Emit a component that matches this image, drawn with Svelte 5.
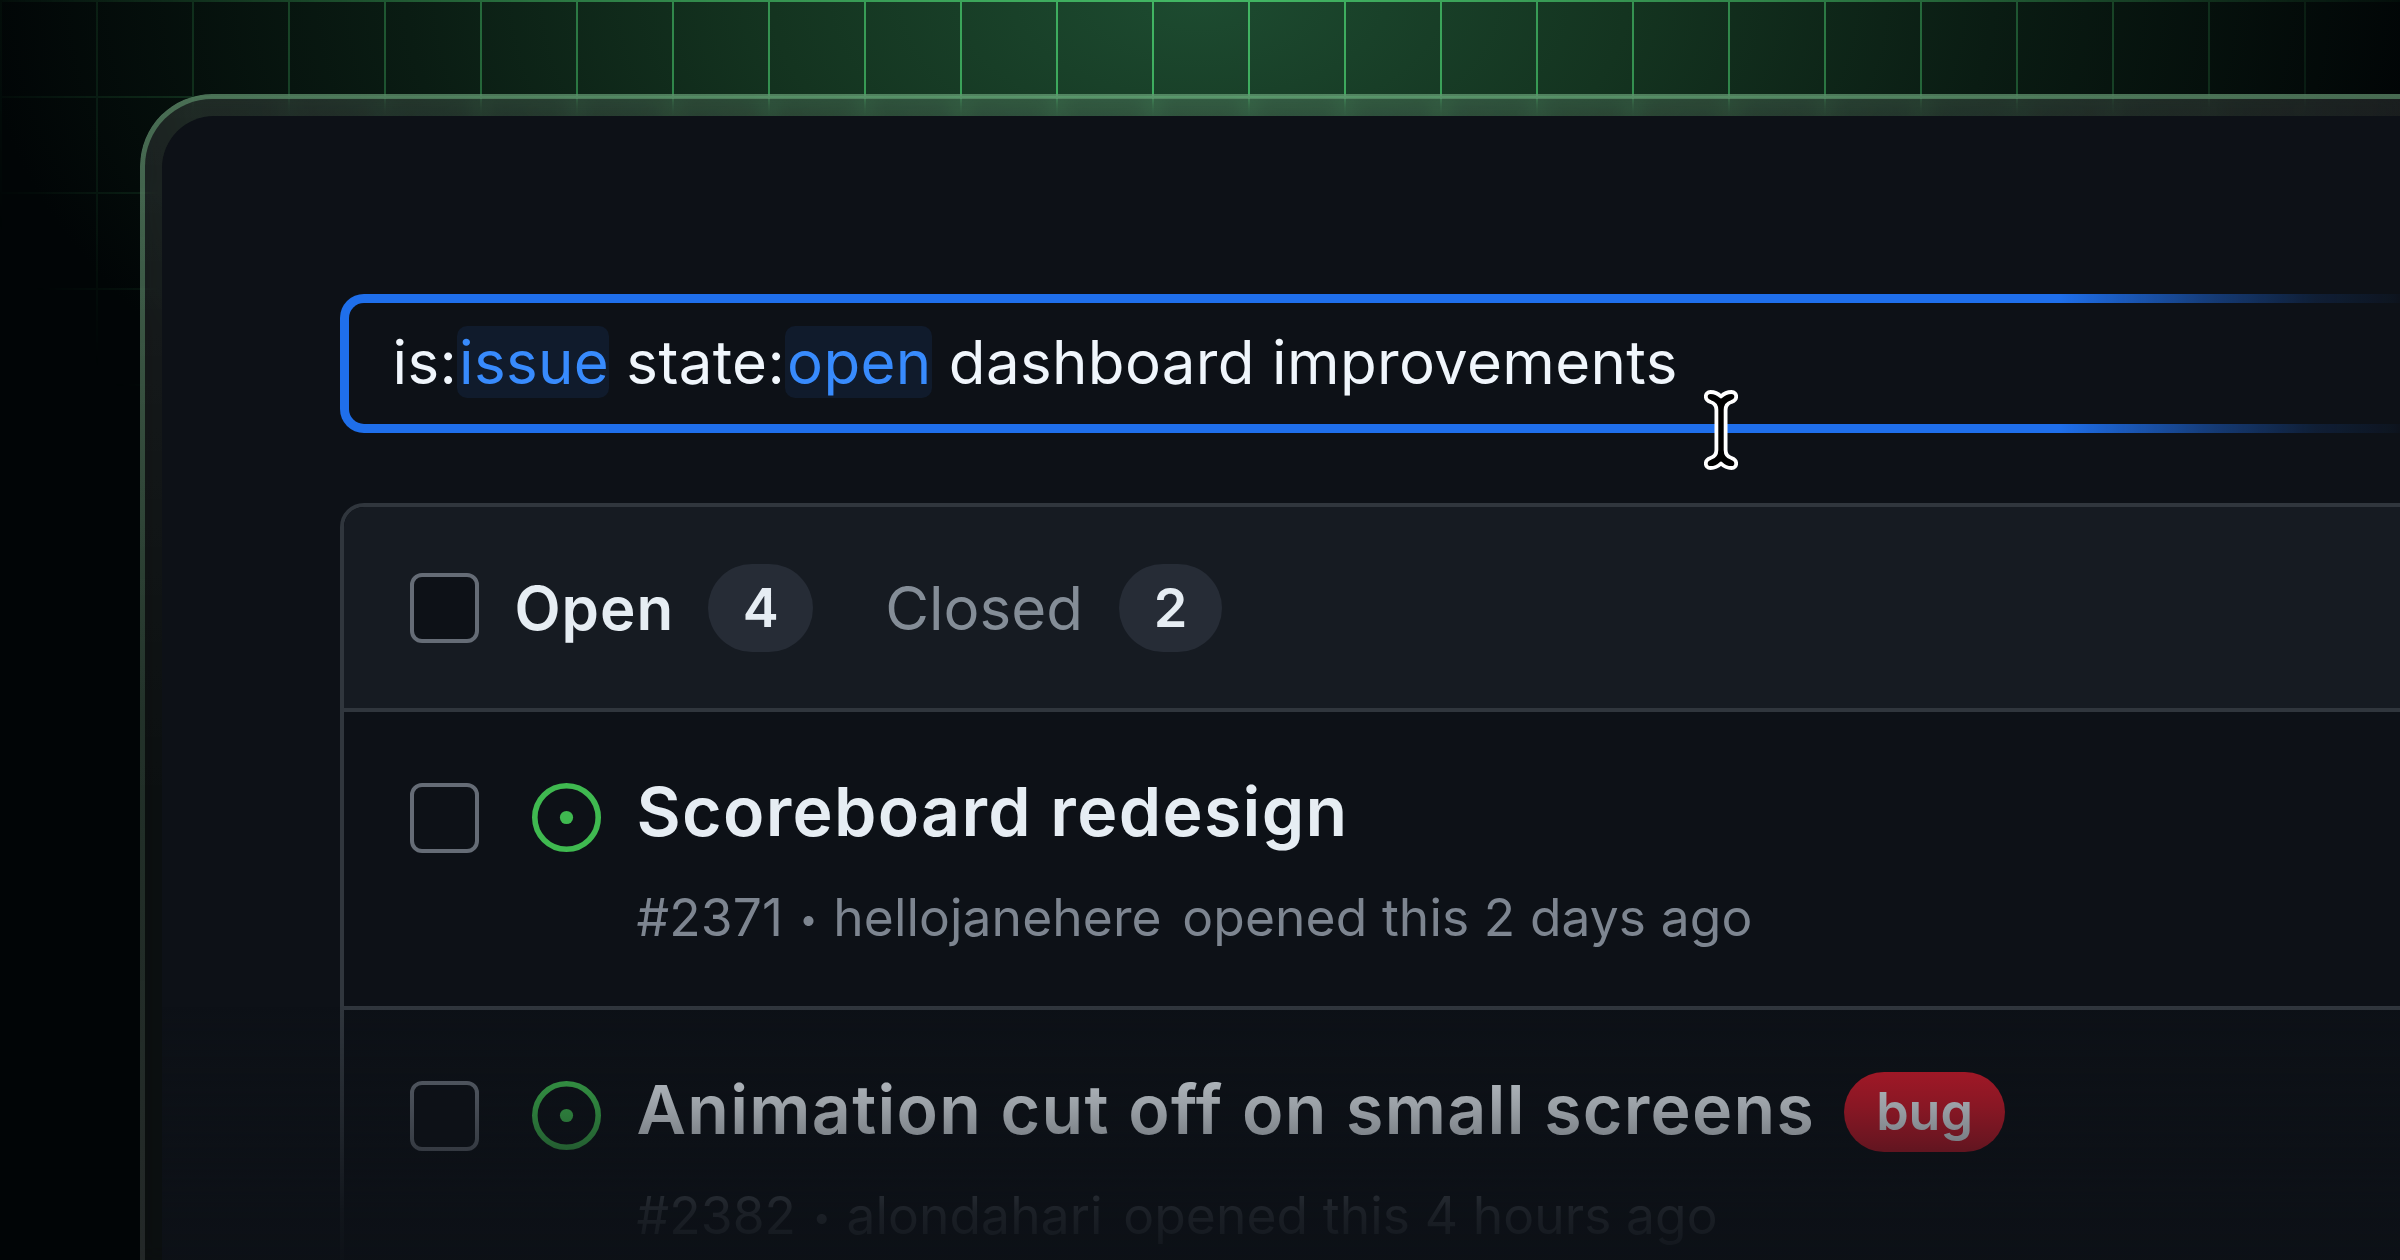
<script lang="ts">
	const issues = [
		{ title: 'Scoreboard redesign', number: 2371, author: 'hellojanehere', age: '2 days ago', label: null },
		{ title: 'Animation cut off on small screens', number: 2382, author: 'alondahari', age: '4 hours ago', label: 'bug' }
	];
</script>

<div class="stage">
	<div class="grid"></div>

	<div class="frame">
		<div class="panel">
			<div class="search">
				<div class="search-inner">
					<span class="query">is:<span class="token">issue</span> state:<span class="token">open</span> dashboard improvements</span>
				</div>
				<svg class="cursor" width="34" height="80" viewBox="0 0 34 80" fill="#000" stroke="#fff" stroke-width="3.8" stroke-linejoin="round">
					<path d="M17 6.5C14 3.5 10 2 6.5 2 3.5 2 1.8 4 1.8 6.5 1.8 9 3.8 11 6.5 12 10 13 12.4 15 12.4 20V60C12.4 65 10 67 6.5 68 3.8 69 1.8 71 1.8 73.5 1.8 76 3.5 78 6.5 78 10 78 14 76.5 17 73.5 20 76.5 24 78 27.5 78 30.5 78 32.2 76 32.2 73.5 32.2 71 30.2 69 27.5 68 24 67 21.6 65 21.6 60V20C21.6 15 24 13 27.5 12 30.2 11 32.2 9 32.2 6.5 32.2 4 30.5 2 27.5 2 24 2 20 3.5 17 6.5Z"/>
				</svg>
			</div>

			<div class="card">
				<div class="card-header">
					<span class="checkbox"></span>
					<span class="tab tab-active">Open</span>
					<span class="count">4</span>
					<span class="tab tab-closed">Closed</span>
					<span class="count count-two">2</span>
				</div>

				{#each issues as issue}
					<div class="row">
						<span class="checkbox"></span>
						<svg class="state" width="69" height="69" viewBox="0 0 69 69" fill="none">
							<circle cx="34.5" cy="34.5" r="31.7" stroke="#3fb950" stroke-width="5.6"/>
							<circle cx="34.5" cy="34.5" r="6.6" fill="#3fb950"/>
						</svg>
						<div class="row-body">
							<div class="row-title">
								<span class="title-text">{issue.title}</span>
								{#if issue.label}
									<span class="label">{issue.label}</span>
								{/if}
							</div>
							<div class="row-meta">#{issue.number} <span class="sep">•</span> <span class="author">{issue.author}</span> opened this {issue.age}</div>
						</div>
					</div>
				{/each}
			</div>

			<div class="fade"></div>
		</div>
	</div>
</div>

<style>
	:global(body) {
		margin: 0;
		background: #000;
	}

	.stage {
		position: relative;
		box-sizing: border-box;
		width: 2400px;
		height: 1260px;
		padding: 94px 0 0 140px;
		overflow: hidden;
		font-family: Inter, "Noto Sans", sans-serif;
		background:
			radial-gradient(ellipse 1220px 640px at 50% 0, #1d4b30 0%, #143420 35%, #0a1c13 65%, #010506 100%),
			#000;
	}

	.grid {
		position: absolute;
		inset: 0;
		background-image:
			linear-gradient(to right, #45bf68 2px, transparent 2px),
			linear-gradient(to bottom, #45bf68 2px, transparent 2px);
		background-size: 96px 96px;
		-webkit-mask-image: radial-gradient(ellipse 1260px 760px at 50% 0, rgba(0, 0, 0, 0.95) 0%, rgba(0, 0, 0, 0.6) 45%, rgba(0, 0, 0, 0.18) 80%, transparent 100%);
		mask-image: radial-gradient(ellipse 1260px 760px at 50% 0, rgba(0, 0, 0, 0.95) 0%, rgba(0, 0, 0, 0.6) 45%, rgba(0, 0, 0, 0.18) 80%, transparent 100%);
	}

	.frame {
		position: relative;
		box-sizing: border-box;
		width: 2400px;
		height: 1300px;
		padding: 22px 18px 18px 22px;
		border-radius: 72px 0 0 0;
		background: linear-gradient(to bottom, rgba(255, 255, 255, 0.1), rgba(255, 255, 255, 0.045) 55%);
		backdrop-filter: blur(10px);
		-webkit-backdrop-filter: blur(10px);
	}

	/* ring only, so the translucent bar under it stays dim */
	.frame::before {
		content: '';
		position: absolute;
		inset: 0;
		padding: 4.5px 0 0 4.5px;
		border-radius: inherit;
		background: linear-gradient(to bottom, rgba(110, 170, 125, 0.55) 0, rgba(100, 150, 115, 0.25) 620px, rgba(255, 255, 255, 0.1) 1200px);
		-webkit-mask: linear-gradient(#000 0 0) content-box, linear-gradient(#000 0 0);
		-webkit-mask-composite: xor;
		mask: linear-gradient(#000 0 0) content-box exclude, linear-gradient(#000 0 0);
	}

	.panel {
		position: relative;
		box-sizing: border-box;
		height: 100%;
		padding: 178px 0 0 178px;
		border-radius: 52px 0 0 0;
		background: #0d1117;
		overflow: hidden;
	}

	.search {
		position: relative;
		width: 2240px;
		height: 139px;
		box-sizing: border-box;
		padding: 9px;
		border-radius: 24px;
		background: linear-gradient(to right, #1f6feb 0, #1f6feb 1720px, rgba(31, 111, 235, 0.45) 1872px, rgba(31, 111, 235, 0.15) 1974px, rgba(31, 111, 235, 0.05) 2050px, transparent 2070px);
	}

	.search-inner {
		box-sizing: border-box;
		display: flex;
		align-items: center;
		height: 100%;
		padding: 0 0 3px 43.5px;
		border-radius: 15px;
		background: #0d1117;
	}

	.query {
		font-size: 60px;
		font-weight: 400;
		line-height: 72px;
		letter-spacing: 0.35px;
		color: #f0f6fc;
		white-space: pre;
	}

	.token {
		padding-left: 2px;
		border-radius: 10px;
		color: #388bfd;
		background: #101b2c;
	}

	.cursor {
		position: absolute;
		left: 1364px;
		top: 96px;
	}

	.card {
		width: 2240px;
		margin-top: 70px;
		border: 4.5px solid #30363d;
		border-radius: 24px 0 0 0;
		box-sizing: border-box;
	}

	.card-header {
		display: flex;
		align-items: center;
		height: 201px;
		padding-left: 65.5px;
		border-radius: 20px 0 0 0;
		background: #161b22;
		border-bottom: 4px solid #30363d;
	}

	.checkbox {
		flex: none;
		box-sizing: border-box;
		width: 69px;
		height: 70px;
		border: 4.5px solid #656c76;
		border-radius: 12px;
		background: #0d1117;
	}

	.tab {
		font-size: 60px;
		line-height: 1;
	}

	.tab-active {
		margin-left: 36px;
		font-weight: 600;
		letter-spacing: 1px;
		color: #e6edf3;
	}

	.tab-closed {
		margin-left: 72px;
		color: #848d97;
	}

	.count {
		display: flex;
		align-items: center;
		justify-content: center;
		box-sizing: border-box;
		width: 105px;
		height: 88px;
		margin-left: 34px;
		border-radius: 44px;
		font-size: 54px;
		font-weight: 600;
		color: #e6edf3;
		background: #262c36;
	}

	.count-two {
		width: 103px;
		margin-left: 36px;
	}

	.row {
		display: flex;
		align-items: flex-start;
		box-sizing: border-box;
		height: 298px;
		padding: 70.5px 0 0 65.5px;
		border-bottom: 4px solid #30363d;
	}

	.state {
		flex: none;
		margin-left: 53px;
	}

	.row-body {
		margin-left: 36px;
	}

	.row-title {
		display: flex;
		align-items: center;
		gap: 29px;
		height: 62px;
		font-size: 68px;
		font-weight: 600;
		letter-spacing: 1.3px;
		color: #e6edf3;
		white-space: nowrap;
	}

	.title-text {
		margin-bottom: 5px;
	}

	.label {
		display: flex;
		align-items: center;
		box-sizing: border-box;
		height: 80px;
		padding: 0 32px;
		border-radius: 40px;
		font-size: 52px;
		letter-spacing: 0;
		background: #cb1a2b;
	}

	.row-meta {
		margin-top: 42.5px;
		font-size: 51.5px;
		line-height: 60px;
		letter-spacing: 0.1px;
		color: #7d8590;
		white-space: nowrap;
	}

	.sep {
		margin: 0 1px 0 2px;
		font-size: 32px;
		vertical-align: 6px;
	}

	.author {
		margin-right: 6px;
	}

	.fade {
		position: absolute;
		left: 0;
		right: 0;
		bottom: 0;
		top: 890px;
		background: linear-gradient(to bottom, rgba(13, 17, 23, 0) 0, rgba(13, 17, 23, 0.35) 100px, rgba(13, 17, 23, 0.5) 135px, rgba(13, 17, 23, 0.87) 205px, #0d1117 270px);
	}
</style>
